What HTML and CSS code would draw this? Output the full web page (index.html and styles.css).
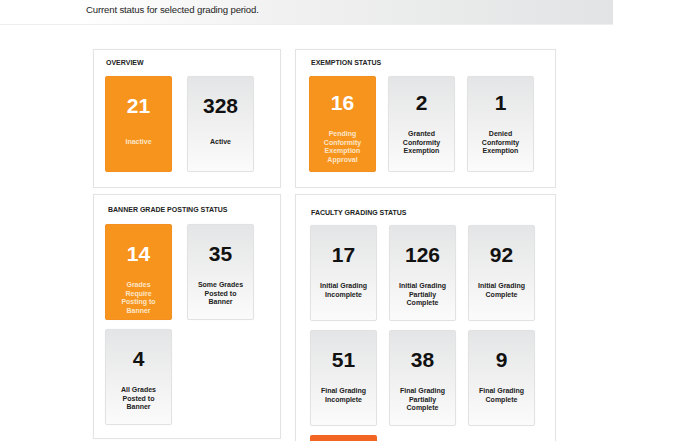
FILE: index.html
```html
<!DOCTYPE html>
<html lang="en">
<head>
<meta charset="utf-8">
<title>Grading Status</title>
<link rel="stylesheet" href="styles.css">
</head>
<body>
<header class="status-bar">
  <p class="status-text">Current status for selected grading period.</p>
</header>
<main class="dashboard">
  <section class="panel panel--overview">
    <h2 class="panel-title">Overview</h2>
    <div class="card-grid card-grid--left">
      <div class="card card--alert card--single"><span class="card-number">21</span><span class="card-label">Inactive</span></div>
      <div class="card card--single"><span class="card-number">328</span><span class="card-label">Active</span></div>
    </div>
  </section>
  <section class="panel panel--exemption">
    <h2 class="panel-title">Exemption Status</h2>
    <div class="card-grid card-grid--right">
      <div class="card card--alert"><span class="card-number">16</span><span class="card-label">Pending Conformity Exemption Approval</span></div>
      <div class="card"><span class="card-number">2</span><span class="card-label">Granted Conformity Exemption</span></div>
      <div class="card"><span class="card-number">1</span><span class="card-label">Denied Conformity Exemption</span></div>
    </div>
  </section>
  <section class="panel panel--banner">
    <h2 class="panel-title">Banner Grade Posting Status</h2>
    <div class="card-grid card-grid--left">
      <div class="card card--alert"><span class="card-number">14</span><span class="card-label">Grades Require Posting to Banner</span></div>
      <div class="card"><span class="card-number">35</span><span class="card-label">Some Grades Posted to Banner</span></div>
      <div class="card"><span class="card-number">4</span><span class="card-label">All Grades Posted to Banner</span></div>
    </div>
  </section>
  <section class="panel panel--faculty">
    <h2 class="panel-title">Faculty Grading Status</h2>
    <div class="card-grid card-grid--right">
      <div class="card"><span class="card-number">17</span><span class="card-label">Initial Grading Incomplete</span></div>
      <div class="card"><span class="card-number">126</span><span class="card-label">Initial Grading Partially Complete</span></div>
      <div class="card"><span class="card-number">92</span><span class="card-label">Initial Grading Complete</span></div>
      <div class="card"><span class="card-number">51</span><span class="card-label">Final Grading Incomplete</span></div>
      <div class="card"><span class="card-number">38</span><span class="card-label">Final Grading Partially Complete</span></div>
      <div class="card"><span class="card-number">9</span><span class="card-label">Final Grading Complete</span></div>
    </div>
    <button class="action-button" type="button"></button>
  </section>
</main>
</body>
</html>
```
FILE: styles.css
```css
* { box-sizing: border-box; }

html, body {
  margin: 0;
  padding: 0;
  background: #ffffff;
  font-family: "Liberation Sans", Arial, Helvetica, sans-serif;
  color: #1a1a1a;
}

.status-bar {
  width: 613px;
  height: 25px;
  background: linear-gradient(90deg, #ffffff 12%, #f1f1f1 45%, #e2e3e4 100%);
  border-bottom: 1px solid #eeeeee;
}

.status-text {
  margin: 0;
  padding: 4px 0 0 86px;
  font-size: 9.6px;
  line-height: 11px;
  letter-spacing: -0.15px;
  color: #1e1e1e;
}

.dashboard {
  display: grid;
  grid-template-columns: 188px 261px;
  column-gap: 14px;
  row-gap: 6px;
  align-items: start;
  padding: 24px 0 0 93px;
}

.panel {
  background: #ffffff;
  border: 1px solid #e3e3e3;
  box-shadow: 0 0 1px rgba(0, 0, 0, 0.06);
  padding: 9px 0 15px 11px;
}

.panel--overview,
.panel--exemption { height: 139px; }

.panel--exemption { padding-left: 13px; }

.panel--banner { padding-top: 11px; padding-bottom: 13px; }

.panel--faculty { padding-top: 14px; padding-left: 14px; }

.panel-title {
  margin: 0 0 9px 1px;
  font-size: 7px;
  line-height: 8px;
  font-weight: bold;
  text-transform: uppercase;
  color: #222222;
}

.panel--exemption .panel-title { margin-left: 2px; }
.panel--banner .panel-title { margin-left: 3px; margin-bottom: 10px; }
.panel--faculty .panel-title { margin-left: 1px; margin-bottom: 8px; }

.card-grid {
  display: grid;
  grid-auto-rows: 96px;
  row-gap: 9px;
}

.card-grid--left {
  grid-template-columns: repeat(2, 67px);
  column-gap: 15px;
}

.card-grid--right {
  grid-template-columns: repeat(3, 67px);
  column-gap: 12px;
}

.card {
  display: flex;
  flex-direction: column;
  align-items: center;
  width: 67px;
  height: 96px;
  padding: 18px 8px 0;
  border: 1px solid #e2e2e2;
  border-radius: 2px;
  background: linear-gradient(180deg, #e4e5e6 0%, #f1f1f1 55%, #fbfbfb 100%);
  box-shadow: 0 0 1px rgba(0, 0, 0, 0.08);
  text-align: center;
}

.panel--exemption .card { padding-top: 15px; }

.card-number {
  display: block;
  font-size: 21px;
  line-height: 21px;
  font-weight: bold;
  color: #111111;
}

.card-label {
  display: block;
  margin-top: 17px;
  font-size: 7px;
  line-height: 8.5px;
  font-weight: bold;
  color: #222222;
}

.card--single .card-label { margin-top: 22px; }

.card--alert {
  background: #f7941e;
  border-color: #f39020;
}

.card--alert .card-number { color: #ffffff; }
.card--alert .card-label { color: #fde6c8; }

.action-button {
  display: block;
  width: 67px;
  height: 24px;
  margin-top: 9px;
  border: 0;
  border-radius: 2px;
  background: #f26522;
}
```
